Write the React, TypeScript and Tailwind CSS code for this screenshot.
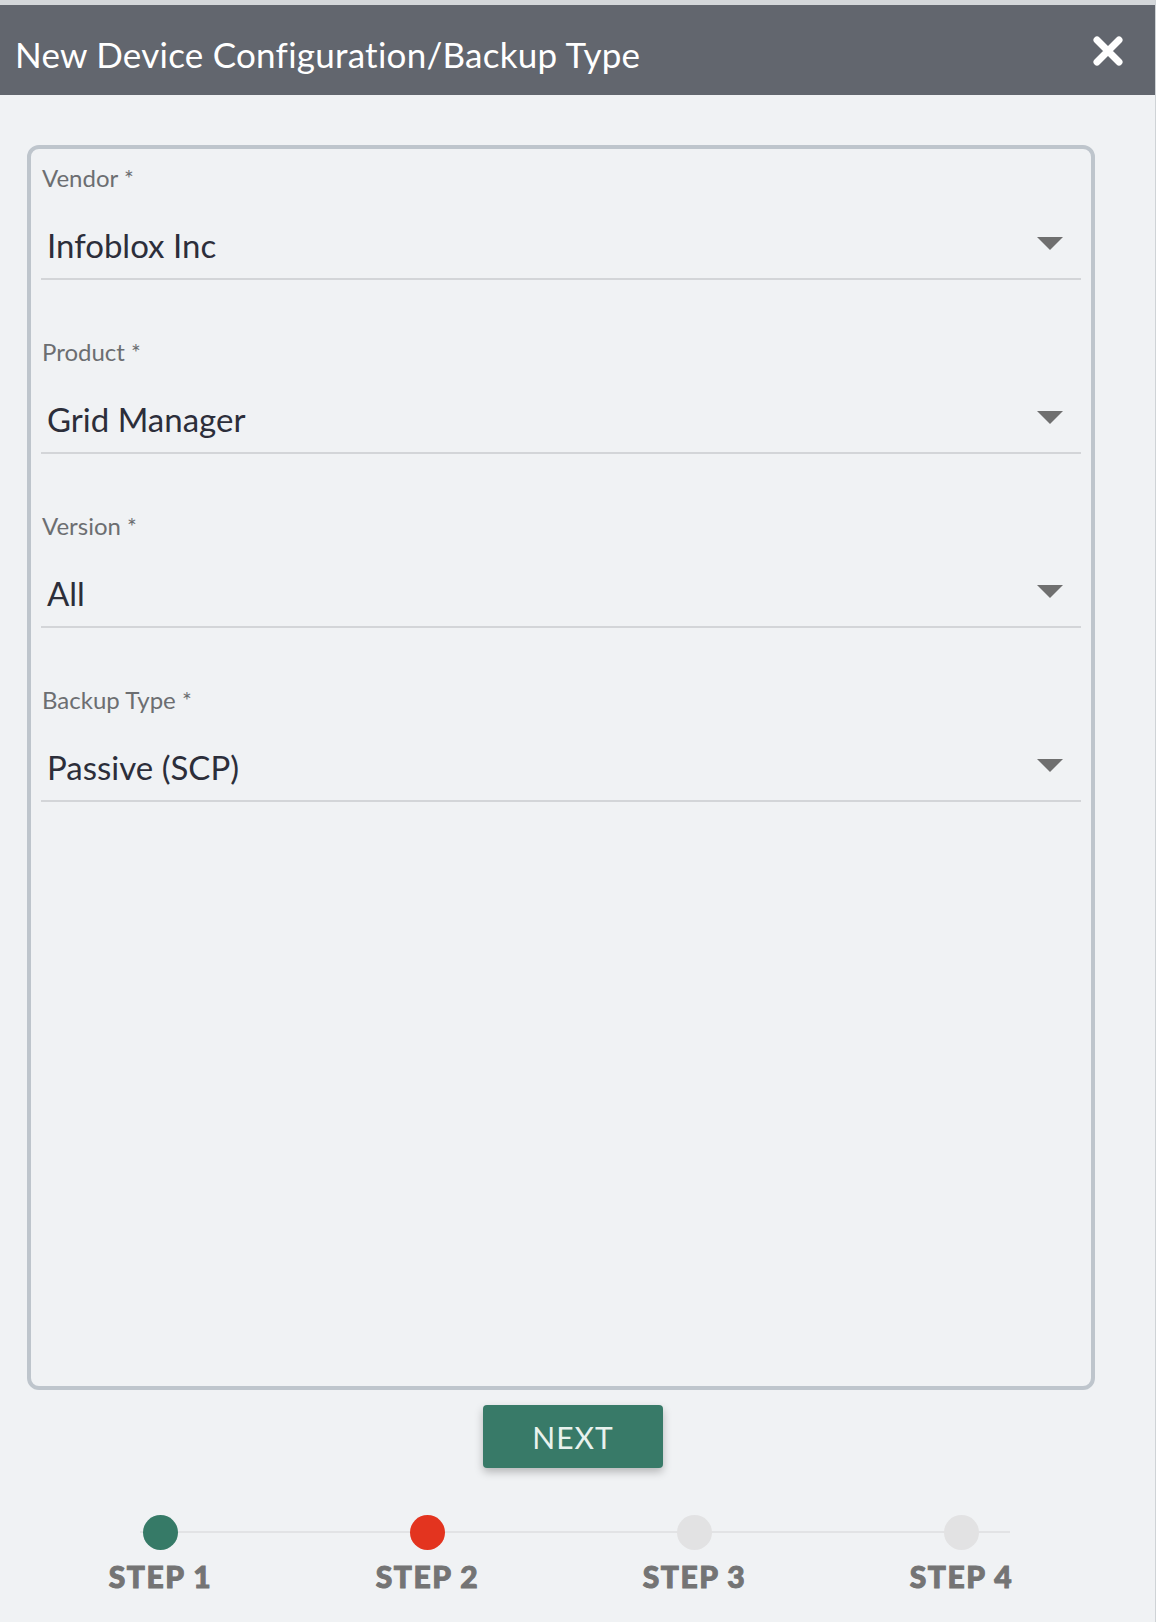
import React from 'react';

// Simple static reproduction of the "new device configuration" wizard step
const FIELDS = [
  { label: 'Vendor', value: 'Infoblox Inc' },
  { label: 'Product', value: 'Grid Manager' },
  { label: 'Version', value: 'All' },
  { label: 'Backup Type', value: 'Passive (SCP)' },
];

const STEPS = [
  { name: 'STEP 1', dot: 'bg-[#367a67]' },
  { name: 'STEP 2', dot: 'bg-[#e3341f]' },
  { name: 'STEP 3', dot: 'bg-[#e2e2e3]' },
  { name: 'STEP 4', dot: 'bg-[#e2e2e3]' },
];

function Caret() {
  return (
    <svg width="26" height="13" viewBox="0 0 26 13" className="mb-[4px] shrink-0">
      <path d="M0 0 L26 0 L13 13 Z" fill="#6f6f6f" />
    </svg>
  );
}

function SelectField({ label, value }: { label: string; value: string }) {
  return (
    <div className="mx-[10px] mb-[58px]">
      <div className="pl-[1px] text-[24px] leading-[28px] text-[#6c6e71]">
        {label} <span className="text-[23px]">*</span>
      </div>
      <div className="flex items-center justify-between pt-[33px] pb-[13px] pl-[6px] pr-[18px] border-b-2 border-[#d3d5d8]">
        <span className="text-[33px] leading-[40px] text-[#2c2e3a]">{value}</span>
        <Caret />
      </div>
    </div>
  );
}

export default function App() {
  return (
    <div
      className="w-[1156px] h-[1622px] bg-[#f0f2f4] border-r border-[#cfd3d6] overflow-hidden"
      style={{ fontFamily: 'Lato, "Open Sans", sans-serif' }}
    >
      <div className="h-[5px] bg-[#d4d7da]" />

      {/* Header */}
      <div className="h-[90px] bg-[#62666e] flex items-center justify-between pl-[15px] pr-[32px]">
        <h1 className="text-[35px] leading-[40px] text-white mt-[7px] tracking-[0.25px]">
          New Device Configuration/Backup Type
        </h1>
        <svg width="30" height="30" viewBox="0 0 30 30" className="mt-[2px]">
          <path d="M4 4 L26 26 M26 4 L4 26" stroke="#ffffff" strokeWidth="7" strokeLinecap="round" />
        </svg>
      </div>

      {/* Form card */}
      <div className="ml-[27px] mt-[50px] w-[1068px] h-[1245px] border-4 border-[#bec5cc] rounded-[12px] pt-[15px]">
        {FIELDS.map((f) => (
          <SelectField key={f.label} label={f.label} value={f.value} />
        ))}
      </div>

      {/* Next button */}
      <div className="flex justify-center pr-[9px] mt-[15px]">
        <button className="w-[180px] h-[63px] rounded-[4px] bg-[#387a68] text-[#e9f2ee] text-[30px] leading-none tracking-[1px] shadow-[0_4px_8px_rgba(0,0,0,0.25)]">
          NEXT
        </button>
      </div>

      {/* Stepper */}
      <div className="relative ml-[27px] w-[1068px] mt-[47px] grid grid-cols-4">
        <div className="absolute left-[113px] top-[16px] w-[870px] h-[2px] bg-[#e2e3e5]" />
        {STEPS.map((s) => (
          <div key={s.name} className="relative flex flex-col items-center">
            <div className={`w-[35px] h-[35px] rounded-full ${s.dot}`} />
            <div className="mt-[8px] text-[30px] leading-[36px] font-black text-[#747474] tracking-[1.5px] [-webkit-text-stroke:1px_#747474]">
              {s.name}
            </div>
          </div>
        ))}
      </div>
    </div>
  );
}
